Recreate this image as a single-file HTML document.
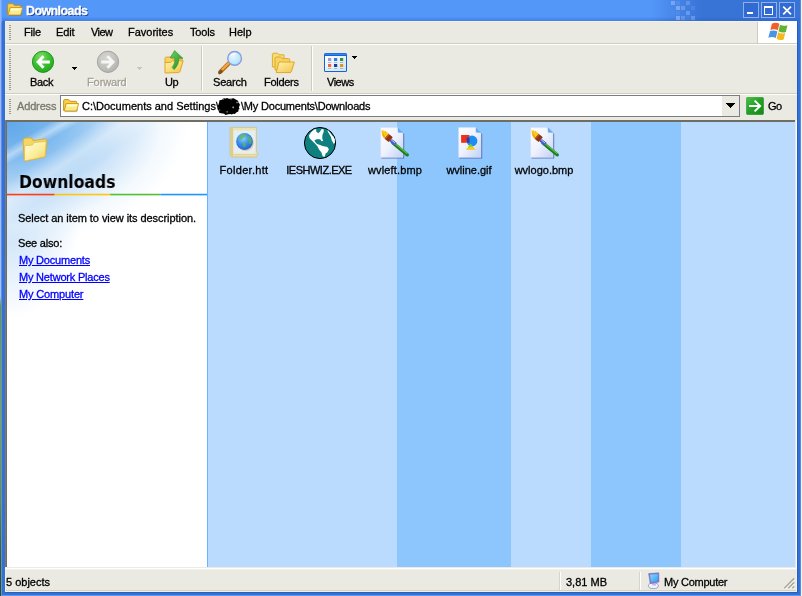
<!DOCTYPE html>
<html>
<head>
<meta charset="utf-8">
<title>Downloads</title>
<style>
html,body{margin:0;padding:0;}
body{width:802px;height:596px;overflow:hidden;position:relative;background:#3272d8;font-family:"Liberation Sans",sans-serif;font-size:11px;color:#000;}
.abs{position:absolute;}
.t{will-change:transform;-webkit-text-stroke:0.3px;position:absolute;white-space:pre;line-height:13px;height:13px;font-size:11px;}
#wall{left:0;top:0;width:1px;height:596px;background:linear-gradient(#9ab0f8 0,#a8c0f4 296px,#6a9a20 306px,#82ac14 420px,#6a9410 500px,#3c5e08 560px,#2f5008 100%);}
#title{left:1px;top:0;width:800px;height:21px;background:linear-gradient(rgba(255,255,255,0) 0,rgba(255,255,255,0) 17px,rgba(40,90,200,.25) 19px,rgba(40,90,200,.35) 21px),linear-gradient(90deg,#5397f9 0,#5397f9 650px,#3873d6 702px,#3873d6 100%);}
#titletext{left:26px;top:3px;letter-spacing:-0.6px;font-family:"Liberation Sans",sans-serif;font-weight:bold;font-size:12.5px;line-height:17px;height:17px;color:#fff;text-shadow:1px 1px 0 #1a3f9a;}
.sq{position:absolute;width:4px;height:4px;background:#c8d8ff;}
.cb{position:absolute;top:2px;width:14px;height:14px;border:1px solid #8eb0ec;background:rgba(20,70,190,.18);}
#client{left:5px;top:21px;width:792px;height:571px;background:#ebeae2;}
.hl{position:absolute;left:5px;width:792px;height:1px;}
.grip{position:absolute;left:9px;width:2px;background:repeating-linear-gradient(#9d9a8b 0,#9d9a8b 1px,transparent 1px,transparent 2px);}
.vsep{position:absolute;width:1px;top:46px;height:45px;background:#cfcdb9;box-shadow:1px 0 0 #fff;}
#addr{left:60px;top:95px;width:678px;height:20px;background:#fff;border:1px solid #7b7d82;}
#left{left:7px;top:122px;width:200px;height:445px;background:#fff;overflow:hidden;}
#right{left:207px;top:122px;width:588px;height:445px;background:#badbfe;}
.stripe{position:absolute;top:0;height:445px;background:#8cc6fd;}
.lbl{will-change:transform;-webkit-text-stroke:0.3px;position:absolute;top:42px;width:90px;text-align:center;white-space:pre;font-size:11px;line-height:13px;}
a.lk{color:#0000ff;text-decoration:underline;}
#cloud{background:
 linear-gradient(150deg,rgba(255,255,255,0) 22px,rgba(255,255,255,.45) 30px,rgba(255,255,255,0) 37px),
 linear-gradient(146deg,rgba(255,255,255,0) 50px,rgba(255,255,255,.4) 66px,rgba(255,255,255,0) 84px),
 radial-gradient(ellipse 182px 122px at 0 0,#60a7ea 0,#78b6ee 25%,#9fccf3 45%,rgba(200,225,248,.85) 65%,rgba(232,243,252,.5) 85%,rgba(255,255,255,0) 100%),
 radial-gradient(ellipse 78px 135px at 0 62px,#b8d7f5 0,rgba(203,226,248,.8) 45%,rgba(255,255,255,0) 100%),
 #fff;}
</style>
</head>
<body>
<div id="wall" class="abs"></div>
<div id="title" class="abs"></div>
<div class="abs" style="left:1px;top:0;width:1px;height:596px;background:linear-gradient(#6aacfc 0,#6aacfc 20px,#5c8ef0 24px,#5c8ef0 100%)"></div>
<div class="abs" style="left:797px;top:21px;width:1px;height:572px;background:#2460c0"></div>
<div class="abs" style="left:800px;top:0;width:1px;height:596px;background:#5a8ae0"></div>
<div class="abs" style="left:801px;top:0;width:1px;height:596px;background:#f4f6ff"></div>
<div class="abs" style="left:5px;top:592px;width:793px;height:1px;background:#2460c0"></div>
<div class="abs" style="left:1px;top:595px;width:800px;height:1px;background:#6a98e8"></div>
<!-- title folder icon -->
<svg class="abs" style="left:7px;top:3px" width="17" height="14" viewBox="0 0 17 14">
  <path d="M0.6 1.8 Q0.6 0.6 1.8 0.6 L5.4 0.6 Q6 0.6 6.5 1.2 L7.3 2.3 L12.8 2.3 Q13.8 2.3 13.8 3.3 L13.8 5 L3.4 5 L1.6 11.6 L0.6 11.6 Z" fill="#f5cf52" stroke="#c48a0c" stroke-width="0.9"/>
  <path d="M3.2 4.5 L15.6 4.5 L13.6 12 L1.2 12 Z" fill="#fdea86" stroke="#d09a12" stroke-width="0.9"/>
  <path d="M4 5.4 L14.4 5.4 L13.9 7.4 L3.5 7.4 Z" fill="#fffbd0"/>
  <path d="M2 12.6 L13.9 12.6 L14.6 10" stroke="#7a6a30" stroke-width="0.7" fill="none" opacity=".5"/>
</svg>
<div id="titletext" class="t">Downloads</div>
<div class="sq" style="left:671px;top:1px;opacity:0.38"></div><div class="sq" style="left:676px;top:1px;opacity:0.1"></div><div class="sq" style="left:686px;top:1px;opacity:0.25"></div><div class="sq" style="left:676px;top:6px;opacity:0.42"></div><div class="sq" style="left:681px;top:6px;opacity:0.28"></div><div class="sq" style="left:691px;top:6px;opacity:0.12"></div><div class="sq" style="left:671px;top:11px;opacity:0.05"></div><div class="sq" style="left:676px;top:11px;opacity:0.08"></div><div class="sq" style="left:686px;top:11px;opacity:0.3"></div><div class="sq" style="left:676px;top:16px;opacity:0.42"></div><div class="sq" style="left:681px;top:16px;opacity:0.25"></div><div class="sq" style="left:686px;top:16px;opacity:0.06"></div><div class="sq" style="left:691px;top:16px;opacity:0.3"></div>

<!-- caption buttons -->
<div class="cb" style="left:743px"></div>
<div class="abs" style="left:747px;top:12px;width:6px;height:2px;background:#fff"></div>
<div class="cb" style="left:761px"></div>
<div class="abs" style="left:764px;top:6px;width:7px;height:6px;border:1px solid #fff;border-top-width:2px"></div>
<div class="cb" style="left:779px"></div>
<svg class="abs" style="left:779px;top:2px" width="16" height="16" viewBox="0 0 16 16"><path d="M4.2 4.6 L12 12.4 M12 4.6 L4.2 12.4" stroke="#fff" stroke-width="1.7" fill="none"/></svg>

<div id="client" class="abs"></div>
<div class="hl" style="top:21px;background:#f4f1e0"></div>
<!-- menu bar -->
<div class="grip" style="top:25px;height:16px"></div>
<div class="t" style="left:24px;top:26px;letter-spacing:-0.2px">File</div>
<div class="t" style="left:55.5px;top:26px;letter-spacing:-0.1px">Edit</div>
<div class="t" style="left:90.5px;top:26px;letter-spacing:-0.6px">View</div>
<div class="t" style="left:128px;top:26px">Favorites</div>
<div class="t" style="left:190px;top:26px;letter-spacing:-0.2px">Tools</div>
<div class="t" style="left:229px;top:26px">Help</div>
<div class="abs" style="left:757px;top:22px;width:1px;height:21px;background:#cfcdb9"></div>
<div class="abs" style="left:758px;top:21px;width:39px;height:22px;background:#fff"></div>
<!-- windows flag -->
<svg class="abs" style="left:766px;top:21px" width="24" height="22" viewBox="0 0 24 22">
  <path d="M5.9 2.7 Q9.6 0.8 13.4 2.7 L11.8 9.2 Q8 7.3 4.4 8.9 Z" fill="#f0602a"/>
  <path d="M14 3.7 Q17.6 5.7 21.5 4.2 L19.8 11 Q16 12.5 12.5 10.2 Z" fill="#62b236"/>
  <path d="M4.1 10.1 Q7.8 8.5 11.4 10.5 L9.8 17 Q6 15.1 2.3 16.7 Z" fill="#4a94e6"/>
  <path d="M12.2 11.3 Q15.8 13.3 19.3 11.9 L17.6 18.5 Q14 20 10.6 17.8 Z" fill="#f5b91e"/>
</svg>
<div class="hl" style="top:43px;background:#d0cfb9"></div>
<div class="hl" style="top:44px;background:#fff"></div>


<!-- toolbar -->
<div class="grip" style="top:49px;height:42px"></div>
<svg class="abs" style="left:30px;top:49px" width="26" height="26" viewBox="0 0 26 26">
  <defs>
    <radialGradient id="gb" cx="0.4" cy="0.28" r="0.8"><stop offset="0" stop-color="#86dc6a"/><stop offset="0.45" stop-color="#42c236"/><stop offset="0.85" stop-color="#28ac24"/><stop offset="1" stop-color="#14941a"/></radialGradient>
    <radialGradient id="gf" cx="0.4" cy="0.3" r="0.8"><stop offset="0" stop-color="#d4d4d0"/><stop offset="0.6" stop-color="#c0c0bc"/><stop offset="1" stop-color="#b0b0ac"/></radialGradient>
  </defs>
  <circle cx="13" cy="12.8" r="10.6" fill="url(#gb)" stroke="#189a18" stroke-width="1"/>
  <path d="M6 13 L12.5 6.3 L14.6 8.3 L11.5 11.6 L19.8 11.6 L19.8 14.4 L11.5 14.4 L14.6 17.7 L12.5 19.7 Z" fill="#fff"/>
</svg>
<div class="t" style="left:30px;top:76px;letter-spacing:-0.3px">Back</div>
<div class="abs" style="left:72px;top:67px;width:5px;height:1px;background:#000"></div><div class="abs" style="left:73px;top:68px;width:3px;height:1px;background:#000"></div><div class="abs" style="left:74px;top:69px;width:1px;height:1px;background:#000"></div>
<svg class="abs" style="left:95px;top:49px" width="26" height="26" viewBox="0 0 26 26">
  <circle cx="13" cy="12.8" r="10.6" fill="url(#gf)" stroke="#a2a29e" stroke-width="1"/>
  <path d="M20 13 L13.5 6.3 L11.4 8.3 L14.5 11.6 L6.2 11.6 L6.2 14.4 L14.5 14.4 L11.4 17.7 L13.5 19.7 Z" fill="#f6f6f4"/>
</svg>
<div class="t" style="left:87px;top:76px;letter-spacing:-0.1px;color:#a3a195;text-shadow:1px 1px 0 #fff">Forward</div>
<div class="abs" style="left:137px;top:67px;width:5px;height:1px;background:#c6c5bb"></div><div class="abs" style="left:138px;top:68px;width:3px;height:1px;background:#c6c5bb"></div><div class="abs" style="left:139px;top:69px;width:1px;height:1px;background:#c6c5bb"></div>
<!-- Up -->
<svg class="abs" style="left:162px;top:49px" width="24" height="26" viewBox="0 0 24 26">
  <defs><linearGradient id="fo" x1="0" y1="0" x2="1" y2="1"><stop offset="0" stop-color="#fff3b0"/><stop offset="1" stop-color="#f2c548"/></linearGradient>
  <linearGradient id="ga" x1="0" y1="0" x2="1" y2="1"><stop offset="0" stop-color="#6fd45c"/><stop offset="1" stop-color="#1f8a24"/></linearGradient></defs>
  <path d="M3 9.5 Q3 8 4.6 8 L9 8 L10.6 10 L19 10 Q20.4 10 20.4 11.4 L20.4 14 L3 14 Z" fill="#f6d365" stroke="#d9a520" stroke-width="0.9"/>
  <path d="M3 24 L3 13.4 L8.6 13.4 L10.4 11.8 L21.2 11.8 L18 22.4 Q17.6 23.6 16.4 23.6 Z" fill="url(#fo)" stroke="#dfa822" stroke-width="1"/>
  <path d="M12.6 1.6 L21 9.4 L16.8 9.2 Q17.2 15.6 12.2 20.6 L10.2 18.6 Q13.6 14 12.8 9 L8.2 8.8 Z" fill="url(#ga)" stroke="#2a8f2a" stroke-width="0.6"/>
</svg>
<div class="t" style="left:165px;top:76px;letter-spacing:-0.5px">Up</div>
<div class="vsep" style="left:201px"></div>
<!-- Search -->
<svg class="abs" style="left:216px;top:49px" width="28" height="26" viewBox="0 0 28 26">
  <defs><radialGradient id="ln" cx="0.4" cy="0.35" r="0.7"><stop offset="0" stop-color="#e8f8ff"/><stop offset="0.55" stop-color="#c4eaff"/><stop offset="1" stop-color="#a8dcfc"/></radialGradient></defs>
  <path d="M4.4 22.8 L12.4 14.8" stroke="#b46a18" stroke-width="4.2" stroke-linecap="round"/>
  <path d="M4.8 22 L12.4 14.4" stroke="#f4a83e" stroke-width="2.2" stroke-linecap="round"/>
  <path d="M3.6 23.8 L5.2 22.2" stroke="#7a5220" stroke-width="3" stroke-linecap="round"/>
  <circle cx="18.6" cy="9.4" r="6.9" fill="url(#ln)" stroke="#8c9cd8" stroke-width="1.4"/>
  <path d="M15 6.6 Q17 4.4 20 4.8" stroke="#fff" stroke-width="1.4" fill="none" opacity=".9"/>
</svg>
<div class="t" style="left:213px;top:76px;letter-spacing:-0.2px">Search</div>
<!-- Folders -->
<svg class="abs" style="left:270px;top:49px" width="26" height="26" viewBox="0 0 26 26">
  <path d="M2.4 5.6 Q2.4 4.2 3.8 4.2 L7.6 4.2 L9 5.8 L14 5.8 L14 18 L2.4 18 Z" fill="#f8dc78" stroke="#d9a520" stroke-width="0.9"/>
  <path d="M5 9.4 Q5 8 6.4 8 L10.6 8 L12 9.6 L18.6 9.6 Q19.8 9.6 19.8 10.8 L19.8 21 L5 21 Z" fill="#f6d365" stroke="#d9a520" stroke-width="0.9"/>
  <path d="M6.2 23.6 L9 13 L24.4 13 L21.4 22.6 Q21 23.6 20 23.6 Z" fill="url(#fo)" stroke="#dfa822" stroke-width="1"/>
</svg>
<div class="t" style="left:264px;top:76px;letter-spacing:-0.3px">Folders</div>
<div class="vsep" style="left:311px"></div>
<!-- Views -->
<svg class="abs" style="left:324px;top:52px" width="24" height="21" viewBox="0 0 24 21">
  <defs><linearGradient id="vw" x1="0" y1="0" x2="1" y2="1"><stop offset="0" stop-color="#ffffff"/><stop offset="1" stop-color="#cfe2fa"/></linearGradient></defs>
  <rect x="0" y="1" width="23" height="19" rx="1.5" fill="#0e64d8"/>
  <rect x="1" y="4" width="21" height="15" fill="url(#vw)"/>
  <rect x="1" y="1.7" width="21" height="1" fill="#4a92f2"/>
  <rect x="4" y="6" width="3.2" height="3" fill="#9c98d0"/><rect x="10" y="6" width="3.2" height="3" fill="#2f7de0"/><rect x="16" y="6" width="3.2" height="3" fill="#2e9a2e"/>
  <rect x="4" y="12" width="3.2" height="3" fill="#ee6a3c"/><rect x="10" y="12" width="3.2" height="3" fill="#1a3f9a"/><rect x="16" y="12" width="3.2" height="3" fill="#dc9a14"/>
  <g fill="#a8a8a8"><rect x="4" y="10" width="3.2" height="0.8"/><rect x="10" y="10" width="3.2" height="0.8"/><rect x="16" y="10" width="3.2" height="0.8"/><rect x="4" y="16" width="3.2" height="0.8"/><rect x="10" y="16" width="3.2" height="0.8"/><rect x="16" y="16" width="3.2" height="0.8"/></g>
</svg>
<div class="abs" style="left:352px;top:56px;width:5px;height:1px;background:#000"></div><div class="abs" style="left:353px;top:57px;width:3px;height:1px;background:#000"></div><div class="abs" style="left:354px;top:58px;width:1px;height:1px;background:#000"></div>
<div class="t" style="left:327px;top:76px;letter-spacing:-0.5px">Views</div>
<div class="hl" style="top:93px;background:#d0cfb9"></div>
<div class="hl" style="top:94px;background:#fff"></div>


<!-- address bar -->
<div class="grip" style="top:99px;height:16px"></div>
<div class="t" style="left:16.5px;top:100px;letter-spacing:-0.15px;color:#7a786c">Address</div>
<div id="addr" class="abs"></div>
<svg class="abs" style="left:63px;top:99px" width="17" height="14" viewBox="0 0 17 14">
  <path d="M0.6 1.8 Q0.6 0.6 1.8 0.6 L5.4 0.6 Q6 0.6 6.5 1.2 L7.3 2.3 L12.8 2.3 Q13.8 2.3 13.8 3.3 L13.8 5 L3.4 5 L1.6 11.6 L0.6 11.6 Z" fill="#f5cf52" stroke="#c48a0c" stroke-width="0.9"/>
  <path d="M3.2 4.5 L15.6 4.5 L13.6 12 L1.2 12 Z" fill="#fdea86" stroke="#d09a12" stroke-width="0.9"/>
  <path d="M4 5.4 L14.4 5.4 L13.9 7.4 L3.5 7.4 Z" fill="#fffbd0"/>
  <path d="M2 12.6 L13.9 12.6 L14.6 10" stroke="#7a6a30" stroke-width="0.7" fill="none" opacity=".5"/>
</svg>
<div class="t" id="a1" style="left:82px;top:100px">C:\Documents and Settings\</div>
<svg class="abs" style="left:215px;top:97px" width="28" height="19" viewBox="0 0 28 19"><path d="M24.2 9.4 L23.9 10.5 L24.6 11.8 L23.4 12.8 L23.5 14.2 L22.4 15.1 L20.9 15.7 L20.0 16.9 L18.1 16.7 L16.8 17.5 L15.2 17.1 L13.7 17.2 L12.2 17.6 L10.4 18.0 L9.2 16.8 L7.7 16.5 L5.9 16.3 L4.2 15.7 L3.8 14.2 L3.5 12.9 L2.3 12.0 L3.6 10.5 L2.3 9.4 L3.2 8.3 L3.6 7.1 L4.0 6.0 L4.2 4.8 L4.4 3.3 L6.4 3.0 L7.4 1.9 L8.9 1.3 L10.6 1.4 L12.1 1.1 L13.7 1.7 L15.1 1.7 L16.7 1.6 L18.6 1.3 L19.9 2.0 L21.2 2.8 L22.7 3.5 L23.4 4.7 L23.7 5.9 L24.8 6.9 L24.8 8.2 Z" fill="#000"/><rect x="7.6" y="1.8" width="0.9" height="0.9" fill="#fff"/><rect x="15.6" y="1.6" width="0.9" height="0.9" fill="#fff"/><rect x="21.6" y="4.8" width="0.9" height="1.4" fill="#fff"/><rect x="17.6" y="9.6" width="1" height="1.6" fill="#fff"/><rect x="11.6" y="14.4" width="1" height="1" fill="#fff"/><rect x="4.4" y="12.6" width="0.8" height="0.8" fill="#fff"/></svg>
<div class="t" id="a2" style="left:240.5px;top:100px;letter-spacing:-0.2px">\My Documents\Downloads</div>
<div class="abs" style="left:722px;top:96px;width:17px;height:20px;background:#ebeae2"></div>
<div class="abs" style="left:726px;top:103px;width:9px;height:1px;background:#000"></div><div class="abs" style="left:727px;top:104px;width:7px;height:1px;background:#000"></div><div class="abs" style="left:728px;top:105px;width:5px;height:1px;background:#000"></div><div class="abs" style="left:729px;top:106px;width:3px;height:1px;background:#000"></div><div class="abs" style="left:730px;top:107px;width:1px;height:1px;background:#000"></div>
<svg class="abs" style="left:746px;top:97px" width="18" height="18" viewBox="0 0 18 18">
  <defs><linearGradient id="go" x1="0" y1="0" x2="1" y2="1"><stop offset="0" stop-color="#4cc04a"/><stop offset="0.45" stop-color="#26a228"/><stop offset="1" stop-color="#14861a"/></linearGradient></defs>
  <rect x="0.3" y="0.3" width="17.4" height="17.4" rx="1.8" fill="url(#go)" stroke="#2a9a2c" stroke-width="0.6"/>
  <path d="M3 9 L13.4 9 M8.6 3.6 L14.2 9 L8.6 14.4" stroke="#fff" stroke-width="1.9" fill="none"/>
</svg>
<div class="t" style="left:768px;top:100px;letter-spacing:-0.5px">Go</div>


<!-- content frame -->
<div class="abs" style="left:5px;top:120px;width:790px;height:447px;background:#706e62"></div>
<div class="abs" style="left:5px;top:120px;width:1px;height:447px;background:#7d7b70"></div>
<div class="abs" style="left:5px;top:567px;width:792px;height:1px;background:#ebeaea"></div>
<div class="abs" style="left:5px;top:568px;width:792px;height:1px;background:#fff"></div>
<div class="abs" style="left:795px;top:120px;width:1px;height:448px;background:#ebe7e0"></div>
<div class="abs" style="left:796px;top:120px;width:1px;height:449px;background:#fff"></div>
<div id="left" class="abs">
  <div class="abs" id="cloud" style="left:0;top:0;width:200px;height:445px"></div>
  <svg class="abs" style="left:15px;top:14px" width="28" height="28" viewBox="0 0 28 28">
    <defs><linearGradient id="pf" x1="0" y1="0" x2="1" y2="1"><stop offset="0" stop-color="#fffde0"/><stop offset="0.55" stop-color="#fbee9c"/><stop offset="1" stop-color="#f1d25c"/></linearGradient></defs>
    <path d="M1 5 Q1.4 2.2 3.2 2 L9 2 Q10.2 2 10.6 3.2 L11 4.6 L22.5 3 Q24.8 2.8 24.9 5 L23.4 19.6 Q23.2 20.8 22 21 L3.8 25 Q2.4 25.2 2.3 23.8 Z" fill="#f4d665" stroke="#dcae30" stroke-width="1"/>
    <path d="M2.6 10.4 Q2.6 9.6 3.6 9.6 L10.2 9 Q11 8.8 11.4 7.8 L12 6.5 L24.2 5.2 L23.2 19.8 Q23.1 20.8 22 21 L3.8 24.8 Q2.6 25 2.5 23.8 Z" fill="url(#pf)" stroke="#e2b83e" stroke-width="0.7"/>
  </svg>
  <div class="abs" id="hd" style="left:12px;top:50px;font-family:'DejaVu Sans','Liberation Sans',sans-serif;font-weight:bold;font-size:17px;line-height:20px;white-space:pre;transform-origin:0 0;transform:scaleX(0.92);will-change:transform;">Downloads</div>
  <svg class="abs" style="left:0;top:71px" width="200" height="3" viewBox="0 0 200 3"><rect x="0" y="0.75" width="47.6" height="1.6" fill="#ff3c12"/><rect x="47.6" y="0.75" width="55.6" height="1.6" fill="#ffc60a"/><rect x="103.2" y="0.75" width="50.1" height="1.6" fill="#52c030"/><rect x="153.3" y="0.75" width="46.7" height="1.6" fill="#1e96ff"/></svg>
  <div class="t" style="left:11px;top:90px;letter-spacing:-0.06px">Select an item to view its description.</div>
  <div class="t" style="left:11px;top:115px;letter-spacing:-0.2px">See also:</div>
  <div class="t" style="left:11.5px;top:132px;letter-spacing:-0.2px"><a class="lk">My Documents</a></div>
  <div class="t" style="left:11.5px;top:149px;letter-spacing:-0.2px"><a class="lk">My Network Places</a></div>
  <div class="t" style="left:11.5px;top:166px;letter-spacing:-0.15px"><a class="lk">My Computer</a></div>
</div>
<div id="right" class="abs">
  <div class="abs" style="left:0;top:0;width:1px;height:445px;background:#6cb2fe"></div>
  <div class="stripe" style="left:190px;width:114px"></div>
  <div class="stripe" style="left:384px;width:90px"></div>
  
  <!-- Folder.htt -->
  <svg class="abs" style="left:22px;top:4px" width="32" height="33" viewBox="0 0 32 33">
    <defs>
      <radialGradient id="gl" cx="0.42" cy="0.32" r="0.72"><stop offset="0" stop-color="#8fd0ff"/><stop offset="0.5" stop-color="#3a8fe8"/><stop offset="1" stop-color="#1f60c8"/></radialGradient>
      <linearGradient id="pp" x1="0" y1="0" x2="1" y2="1"><stop offset="0" stop-color="#ffffff"/><stop offset="0.5" stop-color="#eef2fd"/><stop offset="1" stop-color="#c0d0f6"/></linearGradient>
    </defs>
    <path d="M1 1.4 L27.6 1.4 L27.6 26.4 L29.6 27.6 L27.8 28.6 L27.8 31.2 L3 31.2 L1 29.6 Z" fill="#ebe3ae" stroke="#cfc388" stroke-width="0.8"/>
    <path d="M1 1.4 L4 1.4 L4 31.2 L3 31.2 L1 29.6 Z" fill="#d9ce94"/>
    <rect x="4.7" y="4.4" width="21.6" height="22.5" fill="#e6edf9"/>
    <path d="M4.6 27.6 L27.6 27.6 M4 29.1 L27.6 29.1" stroke="#f6f1cc" stroke-width="0.9"/><path d="M4.4 28.4 L27.8 28.4 M3.8 30 L27.8 30" stroke="#cfc388" stroke-width="0.6"/>
    <ellipse cx="16.6" cy="17" rx="8.2" ry="8" fill="#d8b860" opacity="0.6"/>
    <circle cx="15.5" cy="15.5" r="8.4" fill="url(#gl)"/>
    <path d="M10 10.4 Q12.4 7.8 15.6 7.6 Q17.6 8.6 16.6 10.6 Q14.6 11 13.8 13 Q12 14.6 10.6 13.6 Q9.2 12.4 10 10.4 Z M18.6 9.6 Q21.6 10.6 22.8 13.6 Q23.2 16.6 21.6 18.6 Q19.6 17.4 19.6 15 Q18 12.6 18.6 9.6 Z M13.6 16.4 Q16 16 17 18.4 Q16.6 20.8 15 21.6 Q13.4 19.4 13.6 16.4 Z" fill="#5cb858" opacity="0.72"/>
  </svg>
  <!-- IESHWIZ.EXE -->
  <svg class="abs" style="left:96px;top:4px" width="34" height="34" viewBox="-1 -1 34 34">
    <circle cx="16" cy="16" r="15.6" fill="#0e8080" stroke="#000" stroke-width="1"/>
    <path d="M4.9 8.6 L7.1 5.3 L10.1 2.5 L12.2 1.9 L12.2 4.6 L14.3 6.2 L16.1 4.6 L17.3 2.2 L19.5 1.9 L19.8 4.6 L18.5 7.7 L18.2 11 L19.1 14 L17.6 14.3 L16.1 12.2 L12.5 12.2 L10.4 13.4 L11.6 15.5 L13.1 17 L16.1 17.9 L18.5 19.1 L23.4 20 L24.9 22.2 L23.4 25.2 L21.6 26.4 L20.7 29.7 L18.8 29.4 L17.3 25.2 L15.2 22.8 L13.7 19.8 L11.6 17.3 L8.6 14.3 L5.6 11.3 Z" fill="#fff"/>
    <path d="M23.7 2.8 L26.4 5.9 L28.2 8.6 L29.4 9.5 L30.9 12.5 L30.9 16.1 L29.7 16.7 L27.6 13.1 L27 10.1 L25.2 7.1 L23.7 4.6 Z" fill="#fff"/>
  </svg>
  <!-- wvleft.bmp -->
  <svg class="abs" style="left:170px;top:3px" width="36" height="36" viewBox="0 0 36 36">
    <path d="M4.4 3.6 L21.6 3.6 L27.2 9 L27.2 33.6 L4.4 33.6 Z" fill="#3a4a9c" opacity="0.7"/>
    <path d="M3.6 2.6 L21 2.6 L26 7.6 L26 32.4 L3.6 32.4 Z" fill="url(#pp)" stroke="#d4dcf6" stroke-width="0.5"/>
    <path d="M21 2.6 L26 7.6 L22 7.6 Q21 7.6 21 6.6 Z" fill="#58b0f4" stroke="#8aa0e0" stroke-width="0.4"/>
    <path d="M16 18 L30.2 29.8" stroke="#1d7a20" stroke-width="3.4" stroke-linecap="round"/>
    <path d="M16.6 17.4 L30 28.6" stroke="#52c040" stroke-width="1.3" stroke-linecap="round"/>
    <path d="M10 12 L18.6 19.4" stroke="#4660c8" stroke-width="3.6"/>
    <path d="M11.4 12.4 L18 18 M12.6 11.4 L19 16.8" stroke="#e8eeff" stroke-width="0.7"/>
    <path d="M7.2 13.2 L11.4 8.6 L15.6 12.2 L11.6 16.8 Z" fill="#c25a1a"/>
    <path d="M8.4 14.4 L12.6 9.8 L15.6 12.2 L11.6 16.8 Z" fill="#8e3412"/>
    <path d="M4.6 4.4 Q5.6 6.2 6.6 5.2 Q7.4 6.8 8.6 5.8 Q9.8 7.6 11.4 8.6 L7.2 13.2 Q4.2 10.4 4.6 4.4 Z" fill="#fac818"/>
    <path d="M5.4 6.6 Q6 9.8 8 11.4 L7.2 13.2 Q5 11 5.4 6.6 Z" fill="#f09a10"/>
  </svg>
  <!-- wvline.gif -->
  <svg class="abs" style="left:247.5px;top:3px" width="36" height="36" viewBox="0 0 36 36">
    <path d="M4.4 3.6 L21.6 3.6 L27.2 9 L27.2 33.6 L4.4 33.6 Z" fill="#3a4a9c" opacity="0.7"/>
    <path d="M3.6 2.6 L21 2.6 L26 7.6 L26 32.4 L3.6 32.4 Z" fill="url(#pp)" stroke="#d4dcf6" stroke-width="0.5"/>
    <path d="M21 2.6 L26 7.6 L22 7.6 Q21 7.6 21 6.6 Z" fill="#58b0f4" stroke="#8aa0e0" stroke-width="0.4"/>
    <rect x="6.1" y="10" width="8.4" height="7.8" fill="#f2301a"/>
    <circle cx="17" cy="16" r="5.4" fill="#1e8cf0"/>
    <path d="M11.6 12.4 L14.5 12.4 L14.5 17.8 L12.2 17.8 Q11.4 15 11.6 12.4 Z" fill="#3838a4"/>
    <path d="M15.5 18.8 L20.6 24.8 L11 24.8 Z" fill="#fac818"/>
    <path d="M15.5 18.8 L17.9 21.6 L13.3 21.6 Z" fill="#4cd84a"/>
  </svg>
  <!-- wvlogo.bmp -->
  <svg class="abs" style="left:320px;top:3px" width="36" height="36" viewBox="0 0 36 36">
    <path d="M4.4 3.6 L21.6 3.6 L27.2 9 L27.2 33.6 L4.4 33.6 Z" fill="#3a4a9c" opacity="0.7"/>
    <path d="M3.6 2.6 L21 2.6 L26 7.6 L26 32.4 L3.6 32.4 Z" fill="url(#pp)" stroke="#d4dcf6" stroke-width="0.5"/>
    <path d="M21 2.6 L26 7.6 L22 7.6 Q21 7.6 21 6.6 Z" fill="#58b0f4" stroke="#8aa0e0" stroke-width="0.4"/>
    <path d="M16 18 L30.2 29.8" stroke="#1d7a20" stroke-width="3.4" stroke-linecap="round"/>
    <path d="M16.6 17.4 L30 28.6" stroke="#52c040" stroke-width="1.3" stroke-linecap="round"/>
    <path d="M10 12 L18.6 19.4" stroke="#4660c8" stroke-width="3.6"/>
    <path d="M11.4 12.4 L18 18 M12.6 11.4 L19 16.8" stroke="#e8eeff" stroke-width="0.7"/>
    <path d="M7.2 13.2 L11.4 8.6 L15.6 12.2 L11.6 16.8 Z" fill="#c25a1a"/>
    <path d="M8.4 14.4 L12.6 9.8 L15.6 12.2 L11.6 16.8 Z" fill="#8e3412"/>
    <path d="M4.6 4.4 Q5.6 6.2 6.6 5.2 Q7.4 6.8 8.6 5.8 Q9.8 7.6 11.4 8.6 L7.2 13.2 Q4.2 10.4 4.6 4.4 Z" fill="#fac818"/>
    <path d="M5.4 6.6 Q6 9.8 8 11.4 L7.2 13.2 Q5 11 5.4 6.6 Z" fill="#f09a10"/>
  </svg>
  <div class="lbl" style="left:-8px;letter-spacing:0.3px">Folder.htt</div>
  <div class="lbl" style="left:67px;letter-spacing:-0.5px">IESHWIZ.EXE</div>
  <div class="lbl" style="left:142.5px;letter-spacing:0.15px">wvleft.bmp</div>
  <div class="lbl" style="left:217px">wvline.gif</div>
  <div class="lbl" style="left:292px">wvlogo.bmp</div>
</div>


<!-- status bar -->
<div class="abs" style="left:5px;top:569px;width:792px;height:23px;background:#ebeae2"></div>
<div class="hl" style="top:569px;background:#f1f0ea"></div>
<div class="hl" style="top:590px;background:#d4d1c8"></div>
<div class="hl" style="top:591px;background:#f4eee2"></div>
<div class="t" style="left:6px;top:576px">5 objects</div>
<div class="abs" style="left:559px;top:572px;width:1px;height:18px;background:#d6d4c6;box-shadow:1px 0 0 #fff"></div>
<div class="t" style="left:566px;top:576px">3,81 MB</div>
<div class="abs" style="left:639px;top:572px;width:1px;height:18px;background:#d6d4c6;box-shadow:1px 0 0 #fff"></div>
<svg class="abs" style="left:647px;top:572px" width="14" height="18" viewBox="0 0 14 18">
  <defs><linearGradient id="scr" x1="0" y1="0" x2="1" y2="1"><stop offset="0" stop-color="#8ad8ff"/><stop offset="1" stop-color="#2f9cf2"/></linearGradient></defs>
  <ellipse cx="6.4" cy="13.8" rx="5" ry="2.8" fill="#f2f2fa" stroke="#8f8cc4" stroke-width="0.8"/>
  <path d="M5 10.6 L8.6 10.2 L9 13.4 L5.4 13.6 Z" fill="#b8b8e0"/>
  <path d="M1.6 1.6 L11.8 0.8 L12 10 L3.2 11.6 Z" fill="#7c7ccc" stroke="#6a68b8" stroke-width="0.5"/>
  <path d="M3 2.8 L10.8 2.1 L10.9 8.9 L4.2 10.1 Z" fill="url(#scr)"/>
</svg>
<div class="t" style="left:664px;top:576px;letter-spacing:-0.25px">My Computer</div>
<svg class="abs" style="left:783px;top:577px" width="13" height="13" viewBox="0 0 13 13">
  <g stroke="#fff" stroke-width="1.1"><path d="M2.4 11.8 L11.6 2.6"/><path d="M6.4 11.8 L11.6 6.6"/><path d="M10.4 11.8 L11.6 10.6"/></g>
  <g stroke="#a9a797" stroke-width="1.5"><path d="M1.4 11.2 L11.2 1.4"/><path d="M5.4 11.2 L11.2 5.4"/><path d="M9.4 11.2 L11.2 9.4"/></g>
</svg>
<div class="abs" style="left:796px;top:569px;width:1px;height:23px;background:#f6f2e4"></div>
<div class="abs" style="left:5px;top:569px;width:1px;height:23px;background:#f6f2e4"></div>

</body>
</html>
